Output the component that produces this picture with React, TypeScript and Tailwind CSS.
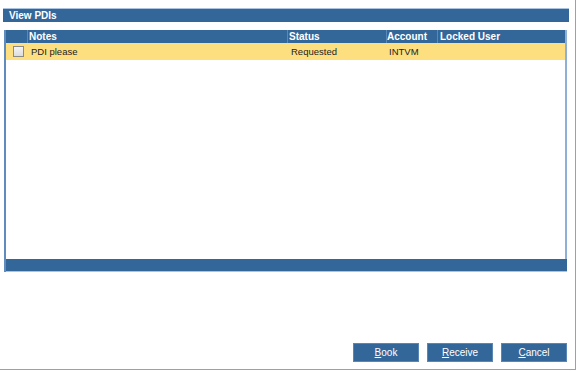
import React from "react";

const Btn = ({ first, rest }: { first: string; rest: string }) => (
  <button className="w-[66px] h-[19px] bg-[#336699] border border-[#5a86b6] text-white text-[10px] leading-none flex items-center justify-center pt-[1px]" style={{ fontFamily: '"Liberation Sans", Arial, sans-serif' }}>
    <span className="underline underline-offset-1">{first}</span>
    <span>{rest}</span>
  </button>
);

const bold = { fontFamily: '"Liberation Sans", Tahoma, Arial, sans-serif' };

export default function App() {
  return (
    <div className="w-[578px] h-[371px] bg-white overflow-hidden" style={bold}>
      <div className="w-[576px] h-[370px] border-r border-b border-[#7aa8d8] flex flex-col pt-[8px]">
        <div className="ml-[3px] w-[566px] h-[14px] bg-[#336699] border-t border-[#a9c3e0] flex items-center pl-[6px] pt-[1px]">
          <span className="text-white font-bold text-[10px] leading-none">View PDIs</span>
        </div>
        <div className="ml-[4px] mt-[8px] w-[563px] h-[242px] flex flex-col border-l-2 border-[#5f8cbd] border-r-2 border-r-[#8fb0d6]">
          <div className="h-[13px] bg-[#336699] flex text-white font-bold text-[10px] leading-none">
            <div className="w-[22px] border-r border-[#5a88b8]" />
            <div className="w-[260px] border-r border-[#5a88b8] flex items-center pl-[1px] pt-[1px]">Notes</div>
            <div className="w-[99px] border-r border-[#5a88b8] flex items-center pl-[1px] pt-[1px]">Status</div>
            <div className="w-[51px] border-r border-[#5a88b8] flex items-center pt-[1px]">Account</div>
            <div className="flex-1 flex items-center pl-[2px] pt-[1px]">Locked User</div>
          </div>
          <div className="h-[17px] bg-[#fedf7f] flex text-[9.5px] text-[#222] leading-none">
            <div className="w-[22px] flex items-center justify-center">
              <div className="w-[11px] h-[11px] border border-[#8a8a8a] bg-gradient-to-b from-[#f4f4f4] to-[#dcdcdc] ml-[2px]" />
            </div>
            <div className="w-[260px] flex items-center pl-[3px]">PDI please</div>
            <div className="w-[99px] flex items-center pl-[3px]">Requested</div>
            <div className="w-[51px] flex items-center pl-[2px]">INTVM</div>
            <div className="flex-1" />
          </div>
          <div className="flex-1 bg-white" />
          <div className="h-[13px] bg-[#336699] border-b border-[#a9c3e0] -mr-[2px]" />
        </div>
        <div className="mt-[71px] flex justify-end gap-[8px] pr-[8px]">
          <Btn first="B" rest="ook" />
          <Btn first="R" rest="eceive" />
          <Btn first="C" rest="ancel" />
        </div>
      </div>
    </div>
  );
}
